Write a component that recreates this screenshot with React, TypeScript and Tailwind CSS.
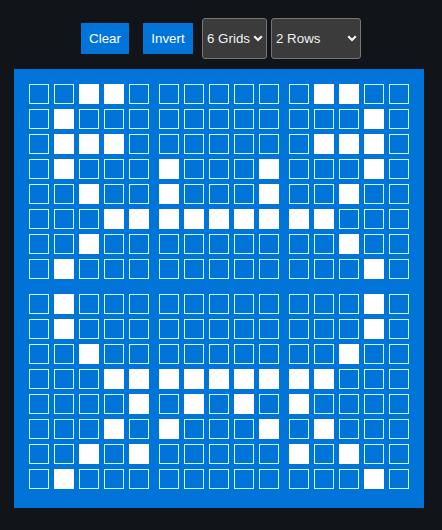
import { useState } from "react";

const BLOCKS: string[][] = [
  [
    "00110 00000 01100",
    "01000 00000 00010",
    "01110 00000 01110",
    "01000 10001 00010",
    "00100 10001 00100",
    "00011 11111 11000",
    "00100 00000 00100",
    "01000 00000 00010",
  ],
  [
    "01000 00000 00010",
    "01000 00000 00010",
    "00100 00000 00100",
    "00011 11111 11000",
    "00001 01010 10000",
    "00010 10001 01000",
    "00101 00000 10100",
    "01000 00000 00010",
  ],
];

// turn the row strings into grids[block][grid][row][col]
function parse(): boolean[][][][] {
  return BLOCKS.map((rows) =>
    [0, 1, 2].map((g) => rows.map((r) => r.split(" ")[g].split("").map((c) => c === "1")))
  );
}

function Chevron() {
  return (
    <svg width="10" height="7" viewBox="0 0 10 7" className="pointer-events-none">
      <path d="M1.2 1.2 L5 5 L8.8 1.2" fill="none" stroke="#f2f2f2" strokeWidth="2.2" />
    </svg>
  );
}

function Select({ value, options, width }: { value: string; options: string[]; width: string }) {
  return (
    <div className={`relative flex h-[41px] items-center ${width}`}>
      <select
        defaultValue={value}
        className="h-full w-full appearance-none rounded-[3px] border border-[#767676] bg-[#3b3b3b] pl-[4px] text-[13.33px] text-[#f0f0f0] outline-none"
        style={{ fontFamily: "inherit" }}
      >
        {options.map((o) => (
          <option key={o}>{o}</option>
        ))}
      </select>
      <span className="absolute right-[4px] top-[17px] flex">
        <Chevron />
      </span>
    </div>
  );
}

export default function App() {
  const [grids, setGrids] = useState(parse);

  const toggle = (b: number, g: number, r: number, c: number) =>
    setGrids((prev) =>
      prev.map((blk, bi) =>
        blk.map((grid, gi) =>
          grid.map((row, ri) =>
            row.map((v, ci) => (bi === b && gi === g && ri === r && ci === c ? !v : v))
          )
        )
      )
    );

  const clear = () => setGrids((p) => p.map((blk) => blk.map((g) => g.map((r) => r.map(() => false)))));
  const invert = () => setGrids((p) => p.map((blk) => blk.map((g) => g.map((r) => r.map((v) => !v)))));

  return (
    <div
      className="min-h-[530px] w-full bg-[#111418] pt-[18px]"
      style={{ fontFamily: '"Liberation Sans", Arial, sans-serif' }}
    >
      <div className="flex items-center justify-center">
        <button
          onClick={clear}
          className="h-[31px] w-[48px] bg-[#0074d9] text-[13.33px] text-white"
        >
          Clear
        </button>
        <button
          onClick={invert}
          className="ml-[14px] h-[31px] w-[50px] bg-[#0074d9] text-[13.33px] text-white"
        >
          Invert
        </button>
        <div className="ml-[9px]">
          <Select value="6 Grids" options={["1 Grid", "2 Grids", "3 Grids", "6 Grids"]} width="w-[65px]" />
        </div>
        <div className="ml-[4px]">
          <Select value="2 Rows" options={["1 Row", "2 Rows", "3 Rows"]} width="w-[90px]" />
        </div>
      </div>

      <div className="ml-[14px] mt-[10px] flex w-[410px] flex-col gap-[15px] bg-[#0074d9] px-[15px] pb-[19px] pt-[15px]">
        {grids.map((blk, b) => (
          <div key={b} className="flex gap-[10px]">
            {blk.map((grid, g) => (
              <div key={g} className="flex flex-col gap-[5px]">
                {grid.map((row, r) => (
                  <div key={r} className="flex gap-[5px]">
                    {row.map((on, c) => (
                      <div
                        key={c}
                        onClick={() => toggle(b, g, r, c)}
                        className={`h-[20px] w-[20px] ${
                          on ? "bg-white" : "border border-[#c8ffff] bg-transparent"
                        }`}
                      />
                    ))}
                  </div>
                ))}
              </div>
            ))}
          </div>
        ))}
      </div>
    </div>
  );
}
